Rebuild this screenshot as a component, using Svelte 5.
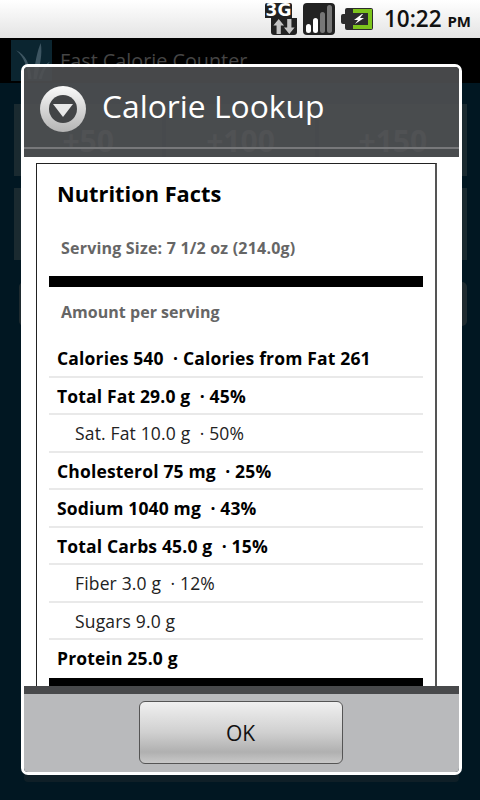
<script>
  const rows = [
    { text: "Calories 540  · Calories from Fat 261", bold: true },
    { text: "Total Fat 29.0 g  · 45%", bold: true },
    { text: "Sat. Fat 10.0 g  · 50%" },
    { text: "Cholesterol 75 mg  · 25%", bold: true },
    { text: "Sodium 1040 mg  · 43%", bold: true },
    { text: "Total Carbs 45.0 g  · 15%", bold: true },
    { text: "Fiber 3.0 g  · 12%" },
    { text: "Sugars 9.0 g" },
    { text: "Protein 25.0 g", bold: true }
  ];
</script>

<div class="screen">
  <header class="status">
    <div class="net">
      <span class="net-label">3G</span>
      <svg class="net-arrows" viewBox="0 0 22 16" aria-hidden="true">
        <path d="M6 1 11 7H8v8H4V7H1zM16 15l5-6h-3V1h-4v8h-3z" fill="#c4c4c4" />
      </svg>
    </div>
    <svg class="signal" viewBox="0 0 32 32" aria-hidden="true">
      <rect width="32" height="32" rx="4" fill="#222" />
      <rect x="3" y="21" width="5" height="9" rx="2.5" fill="#fff" />
      <rect x="10" y="15" width="5" height="15" rx="2.5" fill="#fff" />
      <rect x="17" y="9" width="5" height="21" rx="2.5" fill="#777" />
      <rect x="24" y="2" width="5" height="28" rx="2.5" fill="#777" />
    </svg>
    <svg class="battery" viewBox="0 0 32 24" aria-hidden="true">
      <path d="M6 1h24a2 2 0 0 1 2 2v18a2 2 0 0 1-2 2H6a2 2 0 0 1-2-2v-4H2a2 2 0 0 1-2-2V9a2 2 0 0 1 2-2h2V3a2 2 0 0 1 2-2z" fill="#2c2c2c" />
      <path d="M12 2h19v20H12v-4h15V6H12z" fill="#7cc41c" />
      <path d="M21 7 13 13h4l-3 4 9-6h-4l3-4z" fill="#fff" />
    </svg>
    <div class="clock">10:22 <small>PM</small></div>
  </header>

  <div class="app-bar">
    <svg class="app-logo" viewBox="0 0 40 40" aria-hidden="true">
      <rect width="40" height="40" fill="#0b2530" />
      <path d="M20 38C19 24 14 14 5 10 13 17 16 26 17 38zM22 38C23 22 26 10 29 3 31 14 28 26 25 38zM27 38C29 30 33 24 38 21 34 27 31 32 30 38z" fill="#3d5561" />
    </svg>
    <span>Fast Calorie Counter</span>
  </div>

  <main class="app-body">
    <div class="quick">
      <div class="quick-btn">+50</div>
      <div class="quick-btn">+100</div>
      <div class="quick-btn">+150</div>
    </div>
    <div class="quick second">
      <div class="quick-btn"></div>
      <div class="quick-btn"></div>
      <div class="quick-btn"></div>
    </div>
    <div class="entry"></div>
  </main>

  <div class="dialog" role="dialog" aria-label="Calorie Lookup">
    <div class="dialog-head">
      <div class="head-main">
        <svg class="head-icon" viewBox="0 0 46 46" aria-hidden="true">
          <defs>
            <linearGradient id="ring" x1="0" y1="0" x2="0" y2="1">
              <stop offset="0" stop-color="#fafafa" />
              <stop offset="1" stop-color="#b4b4b4" />
            </linearGradient>
          </defs>
          <circle cx="23" cy="23" r="23" fill="url(#ring)" />
          <circle cx="23" cy="23" r="14" fill="#424446" />
          <path d="M13 18h20L23 31z" fill="#e8e8e8" />
        </svg>
        <h1>Calorie Lookup</h1>
      </div>
      <div class="head-line"></div>
    </div>

    <div class="dialog-body">
      <div class="label-box">
        <h2>Nutrition Facts</h2>
        <p class="serving">Serving Size: 7 1/2 oz (214.0g)</p>
        <div class="rule"></div>
        <p class="amount">Amount per serving</p>
        <ul>
          {#each rows as row}
            <li class:bold={row.bold}>{row.text}</li>
          {/each}
        </ul>
        <div class="rule end"></div>
      </div>
    </div>

    <div class="dialog-foot">
      <button type="button">OK</button>
    </div>
  </div>
</div>

<style>
  :global(body) {
    margin: 0;
    background: #00141e;
  }

  .screen {
    position: relative;
    width: 480px;
    height: 800px;
    overflow: hidden;
    background: #011722;
    font-family: "Open Sans", "Noto Sans", sans-serif;
  }

  .status {
    display: flex;
    align-items: center;
    justify-content: flex-end;
    height: 38px;
    box-sizing: border-box;
    padding: 0 9px 0 0;
    background: linear-gradient(#fff, #e4e4e4);
  }

  .net {
    display: flex;
    flex-direction: column;
    width: 32px;
    height: 32px;
    margin-right: 6px;
  }

  .net-label {
    width: 27px;
    height: 15px;
    border-radius: 2px 2px 0 0;
    background: #222;
    color: #fff;
    font-family: "DejaVu Sans", sans-serif;
    font-size: 17px;
    font-weight: 700;
    line-height: 15px;
    text-align: center;
  }

  .net-arrows {
    width: 26px;
    height: 17px;
    margin-left: 6px;
    border-radius: 0 0 3px 3px;
    background: #222;
  }

  .signal {
    width: 32px;
    height: 32px;
    margin-right: 6px;
  }

  .battery {
    width: 32px;
    height: 24px;
    margin-right: 11px;
  }

  .clock {
    color: #111;
    font-size: 22.5px;
    font-weight: 600;
    line-height: 1;
  }

  .clock small {
    font-size: 15px;
    font-weight: 700;
  }

  .app-bar {
    display: flex;
    align-items: center;
    gap: 8px;
    height: 45px;
    background: #000;
    color: #454545;
    font-size: 19.8px;
  }

  .app-logo {
    width: 41px;
    height: 41px;
    margin-left: 11px;
  }

  .app-body {
    padding: 21px 13px 0 14px;
    background: #011722;
  }

  .quick {
    display: grid;
    grid-template-columns: 1fr 1fr 1fr;
    gap: 4px;
  }

  .quick.second {
    margin-top: 12px;
  }

  .quick-btn {
    height: 72px;
    background: #1a2a30;
    color: #626466;
    font-size: 30px;
    font-weight: 700;
    line-height: 74px;
    text-align: center;
  }

  .entry {
    height: 44px;
    margin: 22px 0 0 5px;
    border-radius: 5px;
    background: #1f2b30;
  }

  .dialog {
    position: absolute;
    top: 64px;
    left: 21px;
    display: flex;
    flex-direction: column;
    width: 441px;
    height: 711px;
    box-sizing: border-box;
    border: 3px solid #fff;
    border-radius: 7px;
    box-shadow: 0 10px 0 -3px rgba(30, 40, 44, 0.5);
  }

  .dialog-head {
    height: 90px;
    border-radius: 4px 4px 0 0;
    background: rgba(79, 80, 82, 0.9);
  }

  .head-main {
    display: flex;
    align-items: center;
    gap: 16px;
    height: 80px;
    padding-left: 16px;
    box-sizing: border-box;
  }

  .head-icon {
    width: 46px;
    height: 46px;
    margin-top: 4px;
  }

  h1 {
    margin: -3px 0 0;
    color: #fff;
    font-size: 31.8px;
    font-weight: 400;
    line-height: 1;
  }

  .head-line {
    height: 2px;
    background: #77787a;
  }

  .dialog-body {
    flex: 1;
    min-height: 0;
    padding: 6px 22px 0 12px;
    overflow: hidden;
    background: #fff;
  }

  .label-box {
    height: 100%;
    box-sizing: border-box;
    border: 1px solid #222;
    border-bottom: 0;
    border-right-width: 2px;
    border-right-color: #555;
    padding: 0 12px;
    overflow: hidden;
  }

  h2 {
    margin: 15px 0 0 8px;
    color: #000;
    font-size: 21.8px;
    font-weight: 700;
    line-height: 30px;
  }

  .serving,
  .amount {
    margin: 0 0 0 12px;
    color: #666;
    font-size: 16px;
    font-weight: 700;
    letter-spacing: 0.2px;
    line-height: 22px;
  }

  .serving {
    margin-top: 28px;
  }

  .rule {
    height: 11px;
    margin-top: 17px;
    background: #000;
  }

  .amount {
    margin-top: 14px;
    letter-spacing: 0.03px;
  }

  ul {
    margin: 17px 0 0;
    padding: 0;
    list-style: none;
  }

  li {
    height: 37.5px;
    box-sizing: border-box;
    padding-left: 26px;
    border-bottom: 2px solid #e9e9e9;
    color: #222;
    font-size: 17.5px;
    letter-spacing: 0.16px;
    line-height: 36px;
    white-space: pre;
  }

  li.bold {
    padding-left: 8px;
    color: #000;
    font-weight: 700;
  }

  li:last-child {
    border-bottom: 0;
  }

  .rule.end {
    margin-top: 0;
  }

  .dialog-foot {
    display: flex;
    justify-content: center;
    align-items: flex-start;
    height: 86px;
    box-sizing: border-box;
    padding: 7px 2px 0 0;
    border-top: 8px solid #48494b;
    border-radius: 0 0 4px 4px;
    background: #b9babc;
  }

  button {
    width: 204px;
    height: 63px;
    border: 1px solid #555;
    border-radius: 6px;
    background: linear-gradient(#f0f0f0 0%, #d0d0d0 50%, #b0b0b0 82%, #c8c8c8 100%);
    color: #111;
    font: inherit;
    font-size: 21px;
  }
</style>
